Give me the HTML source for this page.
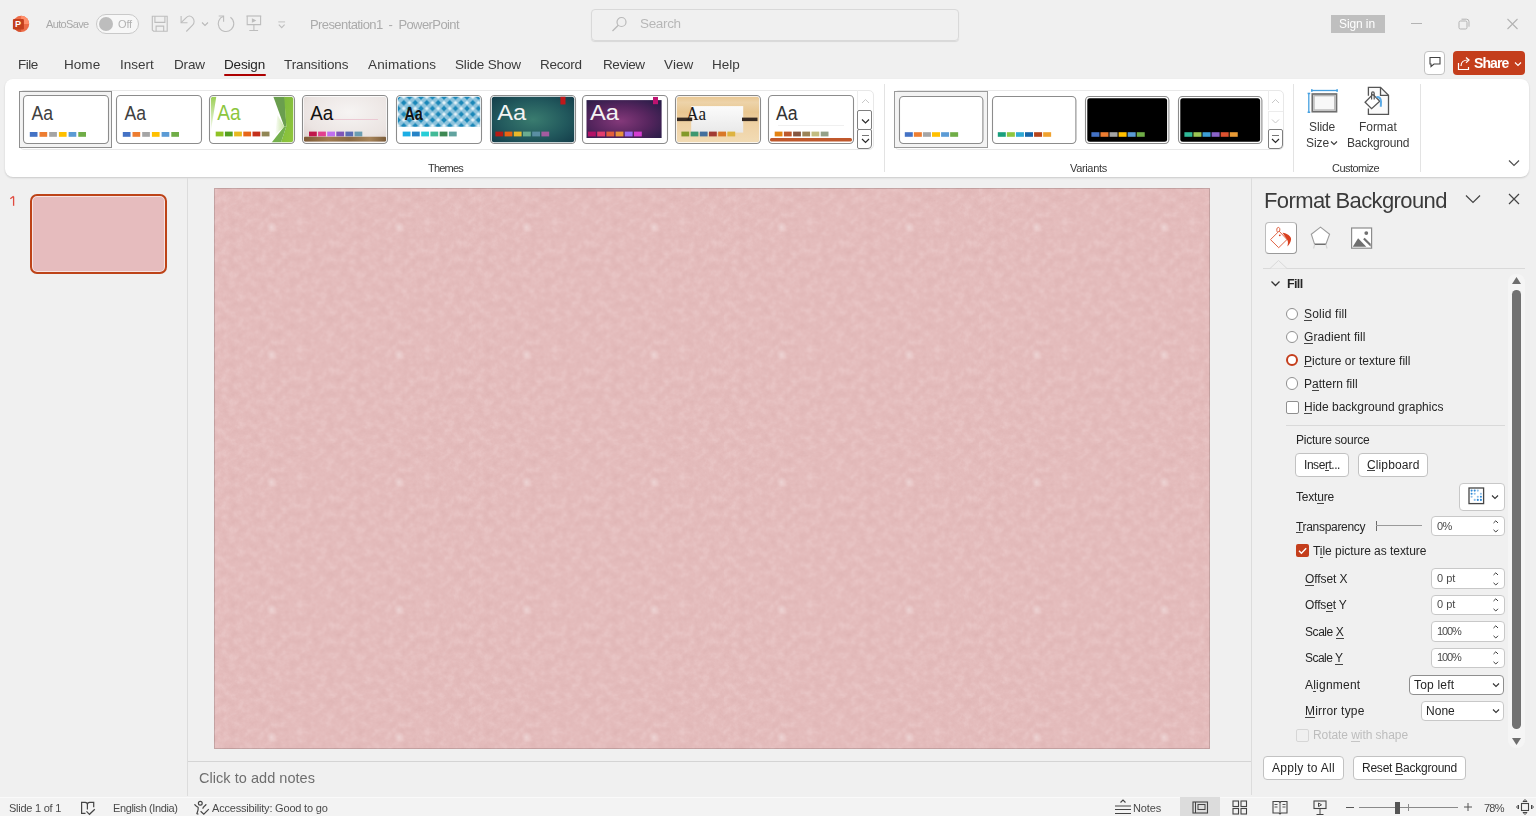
<!DOCTYPE html>
<html><head><meta charset="utf-8"><title>PowerPoint</title>
<style>
html,body{margin:0;padding:0;}
body{width:1536px;height:816px;overflow:hidden;position:relative;background:#f0f0f0;font-family:"Liberation Sans", sans-serif;}
.t{position:absolute;white-space:pre;line-height:1em;will-change:transform;}
svg{overflow:visible;}
</style></head><body>
<svg style="position:absolute;left:10px;top:13px;" width="22" height="22" viewBox="0 0 22 22"><circle cx="11.1" cy="10.9" r="8.1" fill="#ed6c47"/><path d="M11.1 2.8A8.1 8.1 0 0 1 19.2 10.9H11.1z" fill="#ff8f6b"/><path d="M11.1 19A8.1 8.1 0 0 1 3 10.9H11.1z" fill="#d35230"/><rect x="2.9" y="5.9" width="11" height="10.5" rx="1.2" fill="#c43e1c"/><text x="5.1" y="14.4" font-family="Liberation Sans" font-weight="700" font-size="9" fill="#fff">P</text></svg>
<div class="t" style="left:45.70px;top:18.69px;font-size:11px;color:#a8a8a8;font-weight:400;letter-spacing:-0.638px;">AutoSave</div>
<div style="position:absolute;left:95.5px;top:13.5px;width:43px;height:20px;box-sizing:border-box;border:1px solid #c9c9c9;border-radius:10px;background:#f7f7f7;"></div>
<div style="position:absolute;left:98.5px;top:17px;width:14px;height:14px;border-radius:50%;background:#bdbdbd;"></div>
<div class="t" style="left:118.00px;top:18.69px;font-size:11px;color:#b3b3b3;font-weight:400;letter-spacing:-0.161px;">Off</div>
<svg style="position:absolute;left:151px;top:15px;" width="18" height="18" viewBox="0 0 18 18"><path d="M1.3 1.3H16.2V16.2H2.6L1.3 14.9Z" fill="none" stroke="#bdbdbd" stroke-width="1.1"/><path d="M3.9 1.3V7.4H13.9V1.3M5.1 16.2V11.1H12.7V16.2" fill="none" stroke="#bdbdbd" stroke-width="1.1"/></svg>
<svg style="position:absolute;left:178px;top:15px;" width="20" height="18" viewBox="0 0 20 18"><path d="M3.1 1V7.7H9.5" fill="none" stroke="#bdbdbd" stroke-width="1.1"/><path d="M3.1 7.7L8.5 2.3C10.2 0.7 12.8 0.8 14.6 2.6C16.6 4.7 16.6 8.1 14.6 10.1L8.3 16.5" fill="none" stroke="#bdbdbd" stroke-width="1.1"/></svg>
<svg style="position:absolute;left:201px;top:21px;" width="8" height="6" viewBox="0 0 8 6"><path d="M1 1.5l3 3 3-3" fill="none" stroke="#b9b9b9" stroke-width="1.1"/></svg>
<svg style="position:absolute;left:217px;top:15px;" width="19" height="18" viewBox="0 0 19 18"><path d="M1.7 1H6.6V6.7" fill="none" stroke="#bdbdbd" stroke-width="1.1"/><path d="M6.6 1.3A7.8 7.8 0 1 0 13.4 2.3" fill="none" stroke="#bdbdbd" stroke-width="1.1"/></svg>
<svg style="position:absolute;left:245px;top:15px;" width="18" height="17" viewBox="0 0 18 17"><path d="M1.5 1H16.2" stroke="#bdbdbd" stroke-width="1.2"/><path d="M2.2 1V9.6H15.6V1" fill="none" stroke="#bdbdbd" stroke-width="1.1"/><path d="M8.9 9.6V15.5M4.3 15.5H13.1" stroke="#bdbdbd" stroke-width="1.1"/><path d="M6.9 3.3L11.3 5.5L6.9 7.7Z" fill="#bdbdbd"/></svg>
<svg style="position:absolute;left:277px;top:20px;" width="10" height="9" viewBox="0 0 10 9"><path d="M1.3 1.9H8.1" stroke="#c4c4c4" stroke-width="1.1"/><path d="M1.8 4.6L4.7 7.6L7.6 4.6" fill="none" stroke="#bdbdbd" stroke-width="1.1"/></svg>
<div class="t" style="left:310.00px;top:17.50px;font-size:13px;color:#ababab;font-weight:400;letter-spacing:-0.589px;">Presentation1  -  PowerPoint</div>
<div style="position:absolute;left:590.5px;top:8.5px;width:368.5px;height:32px;box-sizing:border-box;border:1px solid #d9d9d9;border-radius:4px;box-shadow:0 1px 1px rgba(0,0,0,0.10);"></div>
<svg style="position:absolute;left:611px;top:16px;" width="17" height="16" viewBox="0 0 17 16"><circle cx="10.5" cy="6" r="4.5" fill="none" stroke="#b9b9b9" stroke-width="1.2"/><path d="M7.3 9.2 L1.5 15" stroke="#b9b9b9" stroke-width="1.3"/></svg>
<div class="t" style="left:640.00px;top:17.07px;font-size:13.5px;color:#b7b7b7;font-weight:400;letter-spacing:-0.330px;">Search</div>
<div style="position:absolute;left:1330.5px;top:14.5px;width:54px;height:18.5px;background:#bfbfbf;"></div>
<div class="t" style="left:1339.40px;top:17.84px;font-size:12px;color:#ffffff;font-weight:400;letter-spacing:-0.100px;">Sign in</div>
<div style="position:absolute;left:1411px;top:23px;width:11px;height:1px;background:#b3b3b3;"></div>
<svg style="position:absolute;left:1458px;top:18px;" width="13" height="12" viewBox="0 0 13 12"><rect x="1" y="3" width="8" height="8" rx="1.5" fill="none" stroke="#b3b3b3" stroke-width="1"/><path d="M3.5 1.2h5a2.5 2.5 0 0 1 2.5 2.5v5" fill="none" stroke="#b3b3b3" stroke-width="1"/></svg>
<svg style="position:absolute;left:1506px;top:18px;" width="13" height="12" viewBox="0 0 13 12"><path d="M1.5 1L11.5 11M11.5 1L1.5 11" stroke="#b3b3b3" stroke-width="1.1"/></svg>
<div class="t" style="left:18.20px;top:57.57px;font-size:13.5px;color:#3b3b3b;font-weight:400;letter-spacing:-0.491px;">File</div>
<div class="t" style="left:64.30px;top:57.57px;font-size:13.5px;color:#3b3b3b;font-weight:400;letter-spacing:0.046px;">Home</div>
<div class="t" style="left:120.30px;top:57.57px;font-size:13.5px;color:#3b3b3b;font-weight:400;letter-spacing:-0.011px;">Insert</div>
<div class="t" style="left:173.70px;top:57.57px;font-size:13.5px;color:#3b3b3b;font-weight:400;letter-spacing:-0.129px;">Draw</div>
<div class="t" style="left:224.00px;top:57.57px;font-size:13.5px;color:#242424;font-weight:400;letter-spacing:-0.172px;">Design</div>
<div class="t" style="left:284.00px;top:57.57px;font-size:13.5px;color:#3b3b3b;font-weight:400;letter-spacing:-0.103px;">Transitions</div>
<div class="t" style="left:367.80px;top:57.57px;font-size:13.5px;color:#3b3b3b;font-weight:400;letter-spacing:0.140px;">Animations</div>
<div class="t" style="left:454.70px;top:57.57px;font-size:13.5px;color:#3b3b3b;font-weight:400;letter-spacing:-0.165px;">Slide Show</div>
<div class="t" style="left:539.90px;top:57.57px;font-size:13.5px;color:#3b3b3b;font-weight:400;letter-spacing:-0.305px;">Record</div>
<div class="t" style="left:602.50px;top:57.57px;font-size:13.5px;color:#3b3b3b;font-weight:400;letter-spacing:-0.428px;">Review</div>
<div class="t" style="left:663.80px;top:57.57px;font-size:13.5px;color:#3b3b3b;font-weight:400;letter-spacing:0.117px;">View</div>
<div class="t" style="left:712.20px;top:57.57px;font-size:13.5px;color:#3b3b3b;font-weight:400;letter-spacing:0.009px;">Help</div>
<div style="position:absolute;left:224px;top:74px;width:42px;height:2px;background:#ad0000;border-radius:1px;"></div>
<div style="position:absolute;left:1424.2px;top:51.3px;width:21.3px;height:23.8px;box-sizing:border-box;background:#fff;border:1px solid #c2c2c2;border-radius:4px;"></div>
<svg style="position:absolute;left:1428px;top:55.3px;" width="14" height="14" viewBox="0 0 14 14"><path d="M2 2.5h10v6.5H6l-3 2.5V9H2z" fill="none" stroke="#424242" stroke-width="1.1"/></svg>
<div style="position:absolute;left:1453px;top:51.3px;width:71.8px;height:23.7px;background:#c43e1c;border-radius:4px;"></div>
<svg style="position:absolute;left:1456px;top:55px;" width="16" height="16" viewBox="0 0 16 16"><path d="M2.5 8v6.5h10V12" fill="none" stroke="#fff" stroke-width="1.2"/><path d="M5 11c0-4 3-6 7-6" fill="none" stroke="#fff" stroke-width="1.2"/><path d="M10 2.5l3 2.6-3 2.6" fill="none" stroke="#fff" stroke-width="1.2"/></svg>
<div class="t" style="left:1474.00px;top:56.05px;font-size:14px;color:#ffffff;font-weight:700;letter-spacing:-0.884px;">Share</div>
<svg style="position:absolute;left:1514px;top:61px;" width="8" height="6" viewBox="0 0 8 6"><path d="M1 1.5l3 3 3-3" fill="none" stroke="#fff" stroke-width="1.2"/></svg>
<div style="position:absolute;left:5px;top:79px;width:1524px;height:98px;background:#fff;border-radius:8px;box-shadow:0 1px 2px rgba(0,0,0,0.16);"></div>
<div style="position:absolute;left:18.5px;top:89.5px;width:855px;height:60px;box-sizing:border-box;border:1px solid #e8e8e8;border-radius:5px;"></div>
<div style="position:absolute;left:19px;top:91px;width:93px;height:57px;box-sizing:border-box;border:1px solid #8f8f8f;background:#f3f3f3;"></div>
<svg style="position:absolute;left:23px;top:95.3px;" width="86" height="49" viewBox="0 0 86 49"><defs><clipPath id="tc0"><rect x="1.8" y="1.8" width="82.4" height="45.4" rx="2.5"/></clipPath></defs><rect x="0.5" y="0.5" width="85" height="48" rx="4" fill="#fff" stroke="#8c8c8c" stroke-width="1.1"/><g clip-path="url(#tc0)"><rect x="0" y="0" width="86" height="49" fill="#fff"/><text x="8.5" y="25.3" font-family="Liberation Sans" font-size="20.5" font-weight="400" fill="#404040" textLength="21.5" lengthAdjust="spacingAndGlyphs" >Aa</text><rect x="6.80" y="37" width="7.7" height="4.8" fill="#4472c4"/><rect x="16.50" y="37" width="7.7" height="4.8" fill="#ed7d31"/><rect x="26.20" y="37" width="7.7" height="4.8" fill="#a5a5a5"/><rect x="35.90" y="37" width="7.7" height="4.8" fill="#ffc000"/><rect x="45.60" y="37" width="7.7" height="4.8" fill="#5b9bd5"/><rect x="55.30" y="37" width="7.7" height="4.8" fill="#70ad47"/></g></svg>
<svg style="position:absolute;left:116px;top:95.3px;" width="86" height="49" viewBox="0 0 86 49"><defs><clipPath id="tc1"><rect x="1.8" y="1.8" width="82.4" height="45.4" rx="2.5"/></clipPath></defs><rect x="0.5" y="0.5" width="85" height="48" rx="4" fill="#fff" stroke="#8c8c8c" stroke-width="1.1"/><g clip-path="url(#tc1)"><rect x="0" y="0" width="86" height="49" fill="#fff"/><text x="8.5" y="25.3" font-family="Liberation Sans" font-size="20.5" font-weight="400" fill="#404040" textLength="21.5" lengthAdjust="spacingAndGlyphs" >Aa</text><rect x="6.80" y="37" width="7.7" height="4.8" fill="#4472c4"/><rect x="16.50" y="37" width="7.7" height="4.8" fill="#ed7d31"/><rect x="26.20" y="37" width="7.7" height="4.8" fill="#a5a5a5"/><rect x="35.90" y="37" width="7.7" height="4.8" fill="#ffc000"/><rect x="45.60" y="37" width="7.7" height="4.8" fill="#5b9bd5"/><rect x="55.30" y="37" width="7.7" height="4.8" fill="#70ad47"/></g></svg>
<svg style="position:absolute;left:209.3px;top:95.3px;" width="86" height="49" viewBox="0 0 86 49"><defs><clipPath id="tc2"><rect x="1.8" y="1.8" width="82.4" height="45.4" rx="2.5"/></clipPath></defs><rect x="0.5" y="0.5" width="85" height="48" rx="4" fill="#fff" stroke="#8c8c8c" stroke-width="1.1"/><g clip-path="url(#tc2)"><rect x="0" y="0" width="86" height="49" fill="#fff"/><defs><linearGradient id="fg1" x1="0" y1="0" x2="0" y2="1"><stop offset="0" stop-color="#9bcf55"/><stop offset="1" stop-color="#ffffff"/></linearGradient><linearGradient id="fg2" x1="0" y1="0" x2="1" y2="1"><stop offset="0" stop-color="#7cb83f"/><stop offset="1" stop-color="#92c83a"/></linearGradient><linearGradient id="fg3" x1="0" y1="0" x2="1" y2="0"><stop offset="0" stop-color="#ffffff"/><stop offset="1" stop-color="#c6e3a0"/></linearGradient></defs><path d="M1.6 1.6H7.3L1.6 38z" fill="url(#fg1)"/><path d="M64.3 1.6H75.8L77.3 31.5H75.2z" fill="#6a9e4e"/><path d="M75.2 1.6H86V49H71.5L77.3 31.5z" fill="url(#fg2)"/><path d="M61.5 49L75.2 31.5H77.3L71.5 49z" fill="#74b04c"/><path d="M68.5 20L75.2 31.5L66 40z" fill="url(#fg3)"/><text x="8.25" y="24.8" font-family="Liberation Sans" font-size="22" font-weight="400" fill="#8cc63e" textLength="23.3" lengthAdjust="spacingAndGlyphs" >Aa</text><rect x="6.70" y="36.6" width="7.8" height="4.8" fill="#90c226"/><rect x="15.90" y="36.6" width="7.8" height="4.8" fill="#54a021"/><rect x="25.10" y="36.6" width="7.8" height="4.8" fill="#e6b91e"/><rect x="34.30" y="36.6" width="7.8" height="4.8" fill="#e76618"/><rect x="43.50" y="36.6" width="7.8" height="4.8" fill="#c42f1a"/><rect x="52.70" y="36.6" width="7.8" height="4.8" fill="#918655"/></g></svg>
<svg style="position:absolute;left:302.2px;top:95.3px;" width="86" height="49" viewBox="0 0 86 49"><defs><clipPath id="tc3"><rect x="1.8" y="1.8" width="82.4" height="45.4" rx="2.5"/></clipPath></defs><rect x="0.5" y="0.5" width="85" height="48" rx="4" fill="#fff" stroke="#8c8c8c" stroke-width="1.1"/><g clip-path="url(#tc3)"><rect x="0" y="0" width="86" height="49" fill="#fff"/><defs><radialGradient id="wg" cx="0.55" cy="0.35" r="0.75"><stop offset="0" stop-color="#f6f4f3"/><stop offset="0.7" stop-color="#ebe4e2"/><stop offset="1" stop-color="#ddd2ce"/></radialGradient><linearGradient id="wd" x1="0" y1="0" x2="1" y2="0"><stop offset="0" stop-color="#7d5a35"/><stop offset="0.3" stop-color="#a07b50"/><stop offset="0.55" stop-color="#8a6a44"/><stop offset="0.8" stop-color="#a7845a"/><stop offset="1" stop-color="#7b5c39"/></linearGradient></defs><rect x="0" y="0" width="86" height="49" fill="url(#wg)"/><rect x="18" y="24" width="58" height="1" fill="#ebc9d3"/><text x="8.3" y="24.5" font-family="Liberation Sans" font-size="20.5" font-weight="400" fill="#111" textLength="23" lengthAdjust="spacingAndGlyphs" >Aa</text><rect x="7.00" y="36.6" width="7.8" height="4.8" fill="#c0174a"/><rect x="16.10" y="36.6" width="7.8" height="4.8" fill="#e3408e"/><rect x="25.20" y="36.6" width="7.8" height="4.8" fill="#c06ff0"/><rect x="34.30" y="36.6" width="7.8" height="4.8" fill="#7f55b8"/><rect x="43.40" y="36.6" width="7.8" height="4.8" fill="#5b6db4"/><rect x="52.50" y="36.6" width="7.8" height="4.8" fill="#6a9db2"/><rect x="2" y="41.7" width="82" height="4.8" rx="1" fill="url(#wd)"/></g></svg>
<svg style="position:absolute;left:395.7px;top:95.3px;" width="86" height="49" viewBox="0 0 86 49"><defs><clipPath id="tc4"><rect x="1.8" y="1.8" width="82.4" height="45.4" rx="2.5"/></clipPath></defs><rect x="0.5" y="0.5" width="85" height="48" rx="4" fill="#fff" stroke="#8c8c8c" stroke-width="1.1"/><g clip-path="url(#tc4)"><rect x="0" y="0" width="86" height="49" fill="#fff"/><defs><pattern id="lat" x="2" y="2" width="11.5" height="11.5" patternUnits="userSpaceOnUse"><rect width="11.5" height="11.5" fill="#8ec3dc"/><path d="M5.75 2.85L8.6 5.75 5.75 8.6 2.9 5.75z" fill="#1a87b8"/><path d="M0 -2.85L2.85 0 0 2.85 -2.85 0zM11.5 -2.85L14.35 0 11.5 2.85 8.65 0zM0 8.65L2.85 11.5 0 14.35 -2.85 11.5zM11.5 8.65L14.35 11.5 11.5 14.35 8.65 11.5z" fill="#1a87b8"/><circle cx="5.75" cy="0" r="1.7" fill="#e4f2f8"/><circle cx="0" cy="5.75" r="1.7" fill="#e4f2f8"/><circle cx="11.5" cy="5.75" r="1.7" fill="#e4f2f8"/><circle cx="5.75" cy="11.5" r="1.7" fill="#e4f2f8"/></pattern></defs><rect x="0" y="0" width="86" height="31.8" fill="url(#lat)"/><text x="8.6" y="24.5" font-family="Liberation Sans" font-size="19" font-weight="700" fill="#111" textLength="18.2" lengthAdjust="spacingAndGlyphs" >Aa</text><rect x="6.70" y="36.6" width="7.8" height="4.8" fill="#1cade4"/><rect x="15.94" y="36.6" width="7.8" height="4.8" fill="#2683c6"/><rect x="25.18" y="36.6" width="7.8" height="4.8" fill="#27ced7"/><rect x="34.42" y="36.6" width="7.8" height="4.8" fill="#42ba97"/><rect x="43.66" y="36.6" width="7.8" height="4.8" fill="#3e8853"/><rect x="52.90" y="36.6" width="7.8" height="4.8" fill="#62a39f"/></g></svg>
<svg style="position:absolute;left:489.5px;top:95.3px;" width="86" height="49" viewBox="0 0 86 49"><defs><clipPath id="tc5"><rect x="1.8" y="1.8" width="82.4" height="45.4" rx="2.5"/></clipPath></defs><rect x="0.5" y="0.5" width="85" height="48" rx="4" fill="#fff" stroke="#8c8c8c" stroke-width="1.1"/><g clip-path="url(#tc5)"><rect x="0" y="0" width="86" height="49" fill="#fff"/><defs><radialGradient id="tg" cx="0.5" cy="0.5" r="0.7"><stop offset="0" stop-color="#3a7c6f"/><stop offset="0.55" stop-color="#22595d"/><stop offset="1" stop-color="#123a48"/></radialGradient></defs><rect x="0" y="0" width="86" height="49" fill="url(#tg)"/><rect x="70.4" y="0" width="5.1" height="9.5" fill="#c0181a"/><text x="7.3" y="25.2" font-family="Liberation Sans" font-size="22" font-weight="400" fill="#f4f4f4" textLength="29" lengthAdjust="spacingAndGlyphs" >Aa</text><rect x="5.40" y="36.6" width="7.8" height="4.8" fill="#b81a14"/><rect x="14.60" y="36.6" width="7.8" height="4.8" fill="#ea6312"/><rect x="23.80" y="36.6" width="7.8" height="4.8" fill="#e9b92a"/><rect x="33.00" y="36.6" width="7.8" height="4.8" fill="#6aac90"/><rect x="42.20" y="36.6" width="7.8" height="4.8" fill="#5a8ea3"/><rect x="51.40" y="36.6" width="7.8" height="4.8" fill="#a35c9f"/></g></svg>
<svg style="position:absolute;left:581.9px;top:95.3px;" width="86" height="49" viewBox="0 0 86 49"><defs><clipPath id="tc6"><rect x="1.8" y="1.8" width="82.4" height="45.4" rx="2.5"/></clipPath></defs><rect x="0.5" y="0.5" width="85" height="48" rx="4" fill="#fff" stroke="#8c8c8c" stroke-width="1.1"/><g clip-path="url(#tc6)"><rect x="0" y="0" width="86" height="49" fill="#fff"/><defs><radialGradient id="pg" cx="0.45" cy="0.55" r="0.7"><stop offset="0" stop-color="#84397a"/><stop offset="0.55" stop-color="#56255e"/><stop offset="1" stop-color="#2a1d48"/></radialGradient></defs><rect x="4.5" y="5.1" width="75.1" height="37.9" fill="url(#pg)"/><rect x="71" y="1.9" width="5" height="7.3" fill="#bd1370"/><text x="8" y="25.2" font-family="Liberation Sans" font-size="22" font-weight="400" fill="#f4f4f4" textLength="29" lengthAdjust="spacingAndGlyphs" >Aa</text><rect x="6.00" y="36.6" width="7.8" height="4.8" fill="#b31166"/><rect x="15.20" y="36.6" width="7.8" height="4.8" fill="#e33d6f"/><rect x="24.40" y="36.6" width="7.8" height="4.8" fill="#e45f3c"/><rect x="33.60" y="36.6" width="7.8" height="4.8" fill="#e9943a"/><rect x="42.80" y="36.6" width="7.8" height="4.8" fill="#9b6bf2"/><rect x="52.00" y="36.6" width="7.8" height="4.8" fill="#d53dd0"/></g></svg>
<svg style="position:absolute;left:674.9px;top:95.3px;" width="86" height="49" viewBox="0 0 86 49"><defs><clipPath id="tc7"><rect x="1.8" y="1.8" width="82.4" height="45.4" rx="2.5"/></clipPath></defs><rect x="0.5" y="0.5" width="85" height="48" rx="4" fill="#fff" stroke="#8c8c8c" stroke-width="1.1"/><g clip-path="url(#tc7)"><rect x="0" y="0" width="86" height="49" fill="#fff"/><defs><linearGradient id="og" x1="0" y1="0" x2="0" y2="1"><stop offset="0" stop-color="#e9c48c"/><stop offset="0.15" stop-color="#edd3a9"/><stop offset="0.35" stop-color="#e8c690"/><stop offset="0.6" stop-color="#efd2a5"/><stop offset="1" stop-color="#f2dcb6"/></linearGradient><linearGradient id="ow" x1="0" y1="0" x2="0" y2="1"><stop offset="0" stop-color="#fbfbfb"/><stop offset="1" stop-color="#e9e9e9"/></linearGradient></defs><rect x="0" y="0" width="86" height="49" fill="url(#og)"/><rect x="16.2" y="11.1" width="52" height="26.5" fill="url(#ow)"/><rect x="2" y="22.6" width="15.2" height="3.5" fill="#362a22"/><rect x="67" y="22.6" width="15.5" height="3.5" fill="#362a22"/><text x="11.2" y="24.5" font-family="Liberation Serif" font-size="18" font-weight="400" fill="#1a1a1a" textLength="20" lengthAdjust="spacingAndGlyphs" >Aa</text><rect x="6.40" y="36.6" width="7.8" height="4.8" fill="#83992a"/><rect x="15.60" y="36.6" width="7.8" height="4.8" fill="#3c9770"/><rect x="24.80" y="36.6" width="7.8" height="4.8" fill="#44709d"/><rect x="34.00" y="36.6" width="7.8" height="4.8" fill="#a23c33"/><rect x="43.20" y="36.6" width="7.8" height="4.8" fill="#d97828"/><rect x="52.40" y="36.6" width="7.8" height="4.8" fill="#deb340"/></g></svg>
<svg style="position:absolute;left:767.6px;top:95.3px;" width="86" height="49" viewBox="0 0 86 49"><defs><clipPath id="tc8"><rect x="1.8" y="1.8" width="82.4" height="45.4" rx="2.5"/></clipPath></defs><rect x="0.5" y="0.5" width="85" height="48" rx="4" fill="#fff" stroke="#8c8c8c" stroke-width="1.1"/><g clip-path="url(#tc8)"><rect x="0" y="0" width="86" height="49" fill="#fff"/><rect x="10" y="30" width="66" height="0.6" fill="#e6e6e6"/><text x="8" y="24.5" font-family="Liberation Sans" font-size="19.5" font-weight="400" fill="#333" textLength="21.6" lengthAdjust="spacingAndGlyphs" >Aa</text><rect x="6.70" y="36.6" width="7.8" height="4.8" fill="#e48312"/><rect x="15.90" y="36.6" width="7.8" height="4.8" fill="#bd582c"/><rect x="25.10" y="36.6" width="7.8" height="4.8" fill="#865640"/><rect x="34.30" y="36.6" width="7.8" height="4.8" fill="#9b8357"/><rect x="43.50" y="36.6" width="7.8" height="4.8" fill="#c2bc80"/><rect x="52.70" y="36.6" width="7.8" height="4.8" fill="#94a088"/><rect x="2" y="43" width="82" height="3.6" rx="1.5" fill="#c0582c"/></g></svg>
<div style="position:absolute;left:857.4px;top:90px;width:15px;height:20.3px;box-sizing:border-box;border-left:1px solid #ececec;"></div>
<svg style="position:absolute;left:860.9px;top:97.5px;" width="9" height="6" viewBox="0 0 9 6"><path d="M1 5l3.5-3.5L8 5" fill="none" stroke="#c8c8c8" stroke-width="1"/></svg>
<div style="position:absolute;left:857.4px;top:110.3px;width:15px;height:19.4px;box-sizing:border-box;border:1px solid #7f7f7f;border-radius:2px;background:#fff;"></div>
<svg style="position:absolute;left:860.9px;top:117.5px;" width="9" height="6" viewBox="0 0 9 6"><path d="M1 1.5l3.5 3.5L8 1.5" fill="none" stroke="#2b2b2b" stroke-width="1.2"/></svg>
<div style="position:absolute;left:857.4px;top:128.7px;width:15px;height:20px;box-sizing:border-box;border:1px solid #7f7f7f;border-radius:2px 2px 4px 2px;background:#fff;"></div>
<svg style="position:absolute;left:860.9px;top:133.5px;" width="9" height="10" viewBox="0 0 9 10"><path d="M1 1.5h7" stroke="#777" stroke-width="1"/><path d="M1 5l3.5 3.5L8 5" fill="none" stroke="#2b2b2b" stroke-width="1.2"/></svg>
<div class="t" style="left:428.00px;top:162.69px;font-size:11px;color:#383838;font-weight:400;letter-spacing:-0.792px;">Themes</div>
<div style="position:absolute;left:883.5px;top:84px;width:1px;height:88px;background:#e3e3e3;"></div>
<div style="position:absolute;left:893.5px;top:89.5px;width:390px;height:60px;box-sizing:border-box;border:1px solid #e8e8e8;border-radius:5px;"></div>
<div style="position:absolute;left:894.2px;top:91px;width:93.4px;height:57px;box-sizing:border-box;border:1px solid #9a9a9a;background:#f3f3f3;"></div>
<svg style="position:absolute;left:898.9px;top:95.6px;" width="84.4" height="48" viewBox="0 0 84.4 48"><defs><clipPath id="vc0"><rect x="1.7" y="1.7" width="81.0" height="44.6" rx="2.5"/></clipPath></defs><rect x="0.5" y="0.5" width="83.4" height="47" rx="4" fill="#fff" stroke="#8c8c8c" stroke-width="1.1"/><g clip-path="url(#vc0)"><rect width="84.4" height="48" fill="#fff"/><rect x="5.80" y="36.2" width="8" height="4.6" fill="#4472c4"/><rect x="14.87" y="36.2" width="8" height="4.6" fill="#ed7d31"/><rect x="23.94" y="36.2" width="8" height="4.6" fill="#a5a5a5"/><rect x="33.01" y="36.2" width="8" height="4.6" fill="#ffc000"/><rect x="42.08" y="36.2" width="8" height="4.6" fill="#5b9bd5"/><rect x="51.15" y="36.2" width="8" height="4.6" fill="#70ad47"/></g></svg>
<svg style="position:absolute;left:991.8px;top:95.6px;" width="84.4" height="48" viewBox="0 0 84.4 48"><defs><clipPath id="vc1"><rect x="1.7" y="1.7" width="81.0" height="44.6" rx="2.5"/></clipPath></defs><rect x="0.5" y="0.5" width="83.4" height="47" rx="4" fill="#fff" stroke="#8c8c8c" stroke-width="1.1"/><g clip-path="url(#vc1)"><rect width="84.4" height="48" fill="#fff"/><rect x="5.80" y="36.2" width="8" height="4.6" fill="#199f7d"/><rect x="14.87" y="36.2" width="8" height="4.6" fill="#8dc63f"/><rect x="23.94" y="36.2" width="8" height="4.6" fill="#2ea8d4"/><rect x="33.01" y="36.2" width="8" height="4.6" fill="#1565a9"/><rect x="42.08" y="36.2" width="8" height="4.6" fill="#b5421a"/><rect x="51.15" y="36.2" width="8" height="4.6" fill="#f0a22e"/></g></svg>
<svg style="position:absolute;left:1085px;top:95.6px;" width="84.4" height="48" viewBox="0 0 84.4 48"><defs><clipPath id="vc2"><rect x="2.3" y="2.3" width="79.80000000000001" height="43.4" rx="2.5"/></clipPath></defs><rect x="0.5" y="0.5" width="83.4" height="47" rx="4" fill="#fff" stroke="#8c8c8c" stroke-width="1.1"/><g clip-path="url(#vc2)"><rect width="84.4" height="48" fill="#000"/><rect x="6.40" y="36.2" width="8" height="4.6" fill="#4472c4"/><rect x="15.47" y="36.2" width="8" height="4.6" fill="#ed7d31"/><rect x="24.54" y="36.2" width="8" height="4.6" fill="#a5a5a5"/><rect x="33.61" y="36.2" width="8" height="4.6" fill="#ffc000"/><rect x="42.68" y="36.2" width="8" height="4.6" fill="#5b9bd5"/><rect x="51.75" y="36.2" width="8" height="4.6" fill="#70ad47"/></g></svg>
<svg style="position:absolute;left:1177.8px;top:95.6px;" width="84.4" height="48" viewBox="0 0 84.4 48"><defs><clipPath id="vc3"><rect x="2.3" y="2.3" width="79.80000000000001" height="43.4" rx="2.5"/></clipPath></defs><rect x="0.5" y="0.5" width="83.4" height="47" rx="4" fill="#fff" stroke="#8c8c8c" stroke-width="1.1"/><g clip-path="url(#vc3)"><rect width="84.4" height="48" fill="#000"/><rect x="6.40" y="36.2" width="8" height="4.6" fill="#2fb898"/><rect x="15.47" y="36.2" width="8" height="4.6" fill="#9bc554"/><rect x="24.54" y="36.2" width="8" height="4.6" fill="#3d9fd6"/><rect x="33.61" y="36.2" width="8" height="4.6" fill="#8a63c8"/><rect x="42.68" y="36.2" width="8" height="4.6" fill="#dc5230"/><rect x="51.75" y="36.2" width="8" height="4.6" fill="#e99a35"/></g></svg>
<div style="position:absolute;left:1267.6px;top:90.2px;width:15px;height:20.3px;box-sizing:border-box;border-left:1px solid #ececec;"></div>
<svg style="position:absolute;left:1271.1px;top:97.7px;" width="9" height="6" viewBox="0 0 9 6"><path d="M1 5l3.5-3.5L8 5" fill="none" stroke="#c8c8c8" stroke-width="1"/></svg>
<div style="position:absolute;left:1267.6px;top:110.5px;width:15px;height:19.4px;box-sizing:border-box;border-left:1px solid #ececec;border-top:1px solid #ececec;"></div>
<svg style="position:absolute;left:1271.1px;top:117.7px;" width="9" height="6" viewBox="0 0 9 6"><path d="M1 1.5l3.5 3.5L8 1.5" fill="none" stroke="#c8c8c8" stroke-width="1"/></svg>
<div style="position:absolute;left:1267.6px;top:128.9px;width:15px;height:20px;box-sizing:border-box;border:1px solid #7f7f7f;border-radius:2px 2px 4px 2px;background:#fff;"></div>
<svg style="position:absolute;left:1271.1px;top:133.7px;" width="9" height="10" viewBox="0 0 9 10"><path d="M1 1.5h7" stroke="#777" stroke-width="1"/><path d="M1 5l3.5 3.5L8 5" fill="none" stroke="#2b2b2b" stroke-width="1.2"/></svg>
<div class="t" style="left:1070.00px;top:162.69px;font-size:11px;color:#383838;font-weight:400;letter-spacing:-0.343px;">Variants</div>
<div style="position:absolute;left:1293px;top:84px;width:1px;height:88px;background:#e3e3e3;"></div>
<svg style="position:absolute;left:1300px;top:84px;" width="44" height="32" viewBox="0 0 44 32"><path d="M11.7 6.5H37.1" stroke="#46a0e0" stroke-width="1.3"/><rect x="11" y="5.2" width="1.6" height="2.6" fill="#46a0e0"/><rect x="36.3" y="5.2" width="1.6" height="2.6" fill="#46a0e0"/><path d="M8.8 9.4V28.3" stroke="#46a0e0" stroke-width="1.3"/><rect x="7.6" y="8.7" width="2.6" height="1.5" fill="#46a0e0"/><rect x="7.6" y="27.5" width="2.6" height="1.5" fill="#46a0e0"/><rect x="12.3" y="10" width="24.2" height="17.7" fill="#f8f8f8" stroke="#6e6e6e" stroke-width="1.7"/><rect x="14" y="11.7" width="20.8" height="14.3" fill="none" stroke="#b4b4b4" stroke-width="1.3"/></svg>
<div class="t" style="left:1308.80px;top:121.34px;font-size:12px;color:#3b3b3b;font-weight:400;letter-spacing:-0.098px;">Slide</div>
<div class="t" style="left:1305.70px;top:137.34px;font-size:12px;color:#3b3b3b;font-weight:400;letter-spacing:-0.086px;">Size</div>
<svg style="position:absolute;left:1330px;top:140px;" width="8" height="6" viewBox="0 0 8 6"><path d="M1 1.5l3 3 3-3" fill="none" stroke="#3b3b3b" stroke-width="1.1"/></svg>
<svg style="position:absolute;left:1360px;top:84px;" width="32" height="32" viewBox="0 0 32 32"><path d="M8.4 11.7V3.3H20.5L28.5 11.3V30.3H8.4V24.4" fill="#fafafa" stroke="#555" stroke-width="1.3"/><path d="M20.5 3.3V11.3H28.5" fill="none" stroke="#555" stroke-width="1.3"/><path d="M5.1 18.2L12.9 10.4L19.8 17.3L11.6 24.7Z" fill="#fff" stroke="#555" stroke-width="1.3"/><path d="M11.6 15.5V9.2a1.3 1.3 0 0 1 2.6 0V15.6" fill="none" stroke="#555" stroke-width="1.2"/><path d="M16.5 13C19.5 12.8 20.8 15 21 17.5L20.8 22.8" fill="none" stroke="#5aaae6" stroke-width="2"/></svg>
<div class="t" style="left:1359.00px;top:121.34px;font-size:12px;color:#3b3b3b;font-weight:400;letter-spacing:-0.053px;">Format</div>
<div class="t" style="left:1347.00px;top:137.34px;font-size:12px;color:#3b3b3b;font-weight:400;letter-spacing:-0.175px;">Background</div>
<div class="t" style="left:1332.40px;top:162.69px;font-size:11px;color:#383838;font-weight:400;letter-spacing:-0.541px;">Customize</div>
<div style="position:absolute;left:1420px;top:84px;width:1px;height:88px;background:#e3e3e3;"></div>
<svg style="position:absolute;left:1508px;top:159px;" width="12" height="8" viewBox="0 0 12 8"><path d="M1 1.5l5 5 5-5" fill="none" stroke="#505050" stroke-width="1.2"/></svg>
<svg style="position:absolute;left:8px;top:194px;" width="10" height="14" viewBox="0 0 10 14"><path d="M5.6 2.6V11.8" stroke="#e04a3f" stroke-width="1.3"/><path d="M2.3 4.8L5.6 2.3" stroke="#e04a3f" stroke-width="1.3"/></svg>
<div style="position:absolute;left:30px;top:194.2px;width:137px;height:79.8px;box-sizing:border-box;border:2.2px solid #bd4318;border-radius:7px;background:#e6bcbe;box-shadow:inset 0 0 0 1px #f6e4e4;"></div>
<div style="position:absolute;left:187px;top:178px;width:1px;height:618px;background:#dcdcdc;"></div>
<div style="position:absolute;left:214px;top:188px;width:996px;height:561px;background:#e4bcbc;"></div>
<svg style="position:absolute;left:214px;top:188px;overflow:hidden;" width="996" height="561" viewBox="0 0 996 561"><defs><filter id="nz" x="0" y="0" width="128" height="128" filterUnits="userSpaceOnUse" color-interpolation-filters="sRGB"><feTurbulence type="fractalNoise" baseFrequency="0.13" numOctaves="4" seed="11" stitchTiles="stitch" result="t"/><feColorMatrix in="t" type="matrix" values="0 0 0 0 0.955  0 0 0 0 0.865  0 0 0 0 0.865  0.85 0 0 0 -0.425" result="lt"/><feColorMatrix in="t" type="matrix" values="0 0 0 0 0.84  0 0 0 0 0.66  0 0 0 0 0.66  -0.85 0 0 0 0.425" result="dk"/><feMerge><feMergeNode in="lt"/><feMergeNode in="dk"/></feMerge></filter><radialGradient id="spot"><stop offset="0" stop-color="#f4e6e6" stop-opacity="0.6"/><stop offset="0.5" stop-color="#f0dcdc" stop-opacity="0.35"/><stop offset="1" stop-color="#f0dada" stop-opacity="0"/></radialGradient><pattern id="tex" x="0" y="0" width="127.5" height="127.5" patternUnits="userSpaceOnUse"><rect width="127.5" height="127.5" fill="#e4bcbc"/><rect width="128" height="128" filter="url(#nz)"/><circle cx="57.5" cy="39" r="5.5" fill="url(#spot)"/></pattern></defs><rect width="996" height="561" fill="url(#tex)"/><rect x="0.5" y="0.5" width="995" height="560" fill="none" stroke="#000" stroke-opacity="0.14" stroke-width="1"/></svg>
<div style="position:absolute;left:188px;top:761px;width:1063px;height:1px;background:#d4d4d4;"></div>
<div class="t" style="left:199.20px;top:770.73px;font-size:14.5px;color:#6e6e6e;font-weight:400;letter-spacing:0.041px;">Click to add notes</div>
<div style="position:absolute;left:1251px;top:178px;width:1px;height:617px;background:#dcdcdc;"></div>
<div class="t" style="left:1264.00px;top:189.88px;font-size:22px;color:#3a3a3a;font-weight:400;letter-spacing:-0.612px;">Format Background</div>
<svg style="position:absolute;left:1465px;top:194px;" width="16" height="10" viewBox="0 0 16 10"><path d="M1 1.5l7 7 7-7" fill="none" stroke="#444" stroke-width="1.2"/></svg>
<svg style="position:absolute;left:1508px;top:193px;" width="12" height="12" viewBox="0 0 12 12"><path d="M1 1l10 10M11 1L1 11" stroke="#444" stroke-width="1.2"/></svg>
<div style="position:absolute;left:1265.2px;top:222.2px;width:31.5px;height:31.5px;box-sizing:border-box;background:#fff;border:1px solid #bdbdbd;border-right-color:#9a9a9a;border-bottom-color:#9a9a9a;border-radius:4px;"></div>
<svg style="position:absolute;left:1265px;top:222px;" width="32" height="32" viewBox="0 0 32 32"><path d="M5.5 17.6L14.1 9.1L22 17.5L13.7 25.7Z" fill="none" stroke="#e06445" stroke-width="1"/><path d="M12.4 10.2C11.2 8 11.8 5.4 13.3 5.4C14.7 5.4 15.4 7.4 14.4 9.4" fill="none" stroke="#e06445" stroke-width="1"/><circle cx="14.8" cy="13.3" r="0.9" fill="#d9401f"/><path d="M17.5 10.7C22 11.3 26.3 13.8 26.1 17.3C25.9 20 24.2 22.6 22.4 24.5C23 21.7 23.4 19.4 22 17.4Z" fill="#d9401f"/></svg>
<svg style="position:absolute;left:1305px;top:222px;" width="30" height="30" viewBox="0 0 30 30"><path d="M15.5 5.1L24.6 12.2L20.9 22.3H9.6L6.3 12.2Z" fill="#fff" stroke="#9c9c9c" stroke-width="1.1"/><path d="M9.6 22.3H20.9" stroke="#6f6f6f" stroke-width="1.4"/><path d="M9.6 22.3L8.6 26.5M20.9 22.3L22.1 26.5" stroke="#d2d2d2" stroke-width="1.1"/></svg>
<svg style="position:absolute;left:1348px;top:224px;" width="28" height="28" viewBox="0 0 28 28"><rect x="3.6" y="4" width="20" height="20.2" fill="#fff" stroke="#8c8c8c" stroke-width="1.2"/><circle cx="18.3" cy="9.1" r="1.9" fill="#707070"/><path d="M4.8 22.8L10.1 14.3L18.3 22.8Z" fill="#6f6f6f"/><path d="M15.1 15.3L16.7 13.8L22.7 19.7V22.8Z" fill="#6f6f6f"/></svg>
<div style="position:absolute;left:1263px;top:268px;width:262px;height:1px;background:#d9d9d9;"></div>
<svg style="position:absolute;left:1270px;top:260px;" width="18" height="9" viewBox="0 0 18 9"><path d="M0 8.5L8.5 0.5 17 8.5" fill="#f0f0f0" stroke="#d9d9d9" stroke-width="1"/></svg>
<svg style="position:absolute;left:1270px;top:280px;" width="11" height="8" viewBox="0 0 11 8"><path d="M1.5 1.5l4 4 4-4" fill="none" stroke="#333" stroke-width="1.3"/></svg>
<div class="t" style="left:1286.70px;top:277.92px;font-size:12.5px;color:#262626;font-weight:700;letter-spacing:-0.641px;">Fill</div>
<div style="position:absolute;left:1508px;top:273.5px;width:17px;height:474px;background:#f5f5f5;border-radius:8px;"></div>
<svg style="position:absolute;left:1511px;top:276px;" width="11" height="9" viewBox="0 0 11 9"><path d="M1 8h9L5.5 1z" fill="#6e6e6e"/></svg>
<div style="position:absolute;left:1511.9px;top:290px;width:8.8px;height:439px;background:#717171;border-radius:4.4px;"></div>
<svg style="position:absolute;left:1511px;top:737px;" width="11" height="9" viewBox="0 0 11 9"><path d="M1 1h9L5.5 8z" fill="#6e6e6e"/></svg>
<div style="position:absolute;left:1285.5px;top:307.7px;width:12.5px;height:12.5px;box-sizing:border-box;border-radius:50%;border:1px solid #8f8f8f;background:#fff;"></div>
<div class="t" style="left:1303.80px;top:308.24px;font-size:12px;color:#262626;font-weight:400;letter-spacing:0.184px;">Solid fill</div>
<div style="position:absolute;left:1303.80px;top:320.00px;width:8.02px;height:1px;background:#262626;opacity:0.85"></div>
<div style="position:absolute;left:1285.5px;top:330.6px;width:12.5px;height:12.5px;box-sizing:border-box;border-radius:50%;border:1px solid #8f8f8f;background:#fff;"></div>
<div class="t" style="left:1303.80px;top:331.14px;font-size:12px;color:#262626;font-weight:400;letter-spacing:0.061px;">Gradient fill</div>
<div style="position:absolute;left:1303.80px;top:342.90px;width:9.34px;height:1px;background:#262626;opacity:0.85"></div>
<div style="position:absolute;left:1285.5px;top:353.8px;width:12.5px;height:12.5px;box-sizing:border-box;border-radius:50%;border:2.7px solid #c43e1c;background:#fff;"></div>
<div class="t" style="left:1303.80px;top:354.54px;font-size:12px;color:#262626;font-weight:400;letter-spacing:0.020px;">Picture or texture fill</div>
<div style="position:absolute;left:1303.80px;top:366.30px;width:8.02px;height:1px;background:#262626;opacity:0.85"></div>
<div style="position:absolute;left:1285.5px;top:377.3px;width:12.5px;height:12.5px;box-sizing:border-box;border-radius:50%;border:1px solid #8f8f8f;background:#fff;"></div>
<div class="t" style="left:1303.80px;top:377.84px;font-size:12px;color:#262626;font-weight:400;letter-spacing:0.028px;">Pattern fill</div>
<div style="position:absolute;left:1311.83px;top:389.60px;width:6.69px;height:1px;background:#262626;opacity:0.85"></div>
<div style="position:absolute;left:1285.5px;top:400.5px;width:13px;height:13px;box-sizing:border-box;border:1px solid #8f8f8f;border-radius:2px;background:#fff;"></div>
<div class="t" style="left:1303.80px;top:401.14px;font-size:12px;color:#262626;font-weight:400;letter-spacing:-0.001px;">Hide background graphics</div>
<div style="position:absolute;left:1303.80px;top:412.90px;width:8.67px;height:1px;background:#262626;opacity:0.85"></div>
<div style="position:absolute;left:1286px;top:424.5px;width:219px;height:1px;background:#d9d9d9;"></div>
<div class="t" style="left:1295.80px;top:434.04px;font-size:12px;color:#262626;font-weight:400;letter-spacing:-0.236px;">Picture source</div>
<div style="position:absolute;left:1295.3px;top:452.5px;width:53.5px;height:24px;box-sizing:border-box;background:#fff;border:1px solid #c2c2c2;border-radius:4px;"></div>
<div class="t" style="left:1304.00px;top:458.64px;font-size:12px;color:#262626;font-weight:400;letter-spacing:-0.446px;">Insert...</div>
<div style="position:absolute;left:1324.89px;top:470.40px;width:4.02px;height:1px;background:#262626;opacity:0.85"></div>
<div style="position:absolute;left:1358px;top:452.5px;width:70.3px;height:24px;box-sizing:border-box;background:#fff;border:1px solid #c2c2c2;border-radius:4px;"></div>
<div class="t" style="left:1366.70px;top:458.64px;font-size:12px;color:#262626;font-weight:400;letter-spacing:0.125px;">Clipboard</div>
<div style="position:absolute;left:1366.70px;top:470.40px;width:8.67px;height:1px;background:#262626;opacity:0.85"></div>
<div class="t" style="left:1295.80px;top:491.34px;font-size:12px;color:#262626;font-weight:400;letter-spacing:-0.208px;">Texture</div>
<div style="position:absolute;left:1316.97px;top:503.10px;width:6.69px;height:1px;background:#262626;opacity:0.85"></div>
<div style="position:absolute;left:1459px;top:482.5px;width:45.5px;height:28px;box-sizing:border-box;background:#fff;border:1px solid #c8c8c8;border-radius:4px;"></div>
<svg style="position:absolute;left:1468px;top:487px;" width="18" height="18" viewBox="0 0 18 18"><rect x="1" y="1" width="14.6" height="15.6" fill="#fff" stroke="#454545" stroke-width="1.3"/><circle cx="3.6" cy="3.6" r="1.05" fill="#2f8ad8" opacity="1"/><circle cx="3.6" cy="6.7" r="1.05" fill="#2f8ad8" opacity="1"/><circle cx="3.6" cy="9.8" r="1.05" fill="#2f8ad8" opacity="0.55"/><circle cx="6.7" cy="3.6" r="1.05" fill="#2f8ad8" opacity="1"/><circle cx="6.7" cy="6.7" r="1.05" fill="#2f8ad8" opacity="0.55"/><circle cx="6.7" cy="12.9" r="1.05" fill="#2f8ad8" opacity="0.55"/><circle cx="9.8" cy="3.6" r="1.05" fill="#2f8ad8" opacity="0.55"/><circle cx="9.8" cy="9.8" r="1.05" fill="#2f8ad8" opacity="0.55"/><circle cx="9.8" cy="12.9" r="1.05" fill="#2f8ad8" opacity="1"/><circle cx="12.9" cy="6.7" r="1.05" fill="#2f8ad8" opacity="0.55"/><circle cx="12.9" cy="9.8" r="1.05" fill="#2f8ad8" opacity="1"/><circle cx="12.9" cy="12.9" r="1.05" fill="#2f8ad8" opacity="1"/></svg>
<svg style="position:absolute;left:1491px;top:494px;" width="8" height="6" viewBox="0 0 8 6"><path d="M1 1.5l3 3 3-3" fill="none" stroke="#333" stroke-width="1.1"/></svg>
<div class="t" style="left:1295.80px;top:520.64px;font-size:12px;color:#262626;font-weight:400;letter-spacing:-0.310px;">Transparency</div>
<div style="position:absolute;left:1295.80px;top:532.40px;width:6.89px;height:1px;background:#262626;opacity:0.85"></div>
<div style="position:absolute;left:1376px;top:521px;width:1.2px;height:9.5px;background:#6a6a6a;"></div>
<div style="position:absolute;left:1376px;top:525px;width:46px;height:1px;background:#9a9a9a;"></div>
<div style="position:absolute;left:1430.5px;top:516.3px;width:74px;height:19.7px;box-sizing:border-box;background:#fff;border:1px solid #c8c8c8;border-radius:4px;"></div>
<div class="t" style="left:1436.70px;top:520.84px;font-size:11px;color:#4a4a4a;font-weight:400;letter-spacing:-0.703px;">0%</div>
<svg style="position:absolute;left:1493px;top:519.5999999999999px;" width="6" height="4" viewBox="0 0 6 4"><path d="M0.5 3L2.8 0.8L5 3" fill="none" stroke="#3a3a3a" stroke-width="1"/></svg>
<svg style="position:absolute;left:1493px;top:529.2px;" width="6" height="4" viewBox="0 0 6 4"><path d="M0.5 0.8L2.8 3L5 0.8" fill="none" stroke="#3a3a3a" stroke-width="1"/></svg>
<div style="position:absolute;left:1295.5px;top:544px;width:13px;height:13px;background:#c43e1c;border-radius:2px;"></div>
<svg style="position:absolute;left:1295.5px;top:544px;" width="13" height="13" viewBox="0 0 13 13"><path d="M3 6.8l2.4 2.4 4.8-5" fill="none" stroke="#fff" stroke-width="1.4"/></svg>
<div class="t" style="left:1313.30px;top:545.34px;font-size:12px;color:#262626;font-weight:400;letter-spacing:-0.038px;">Tile picture as texture</div>
<div style="position:absolute;left:1320.14px;top:557.10px;width:2.69px;height:1px;background:#262626;opacity:0.85"></div>
<div class="t" style="left:1305.00px;top:573.14px;font-size:12px;color:#262626;font-weight:400;letter-spacing:-0.080px;">Offset X</div>
<div style="position:absolute;left:1305.00px;top:584.90px;width:9.34px;height:1px;background:#262626;opacity:0.85"></div>
<div class="t" style="left:1305.00px;top:599.34px;font-size:12px;color:#262626;font-weight:400;letter-spacing:-0.153px;">Offset Y</div>
<div style="position:absolute;left:1326.17px;top:611.10px;width:6.69px;height:1px;background:#262626;opacity:0.85"></div>
<div class="t" style="left:1305.00px;top:626.14px;font-size:12px;color:#262626;font-weight:400;letter-spacing:-0.437px;">Scale X</div>
<div style="position:absolute;left:1335.72px;top:637.90px;width:8.02px;height:1px;background:#262626;opacity:0.85"></div>
<div class="t" style="left:1305.00px;top:652.34px;font-size:12px;color:#262626;font-weight:400;letter-spacing:-0.520px;">Scale Y</div>
<div style="position:absolute;left:1335.00px;top:664.10px;width:8.02px;height:1px;background:#262626;opacity:0.85"></div>
<div style="position:absolute;left:1430.5px;top:568.3px;width:74px;height:20.5px;box-sizing:border-box;background:#fff;border:1px solid #c8c8c8;border-radius:4px;"></div>
<div class="t" style="left:1436.70px;top:573.24px;font-size:11px;color:#4a4a4a;font-weight:400;letter-spacing:-0.015px;">0 pt</div>
<svg style="position:absolute;left:1493px;top:571.5999999999999px;" width="6" height="4" viewBox="0 0 6 4"><path d="M0.5 3L2.8 0.8L5 3" fill="none" stroke="#3a3a3a" stroke-width="1"/></svg>
<svg style="position:absolute;left:1493px;top:582.0px;" width="6" height="4" viewBox="0 0 6 4"><path d="M0.5 0.8L2.8 3L5 0.8" fill="none" stroke="#3a3a3a" stroke-width="1"/></svg>
<div style="position:absolute;left:1430.5px;top:594.5px;width:74px;height:20.5px;box-sizing:border-box;background:#fff;border:1px solid #c8c8c8;border-radius:4px;"></div>
<div class="t" style="left:1436.70px;top:599.44px;font-size:11px;color:#4a4a4a;font-weight:400;letter-spacing:-0.015px;">0 pt</div>
<svg style="position:absolute;left:1493px;top:597.8px;" width="6" height="4" viewBox="0 0 6 4"><path d="M0.5 3L2.8 0.8L5 3" fill="none" stroke="#3a3a3a" stroke-width="1"/></svg>
<svg style="position:absolute;left:1493px;top:608.2px;" width="6" height="4" viewBox="0 0 6 4"><path d="M0.5 0.8L2.8 3L5 0.8" fill="none" stroke="#3a3a3a" stroke-width="1"/></svg>
<div style="position:absolute;left:1430.5px;top:621.3px;width:74px;height:20.5px;box-sizing:border-box;background:#fff;border:1px solid #c8c8c8;border-radius:4px;"></div>
<div class="t" style="left:1436.70px;top:626.24px;font-size:11px;color:#4a4a4a;font-weight:400;letter-spacing:-1.085px;">100%</div>
<svg style="position:absolute;left:1493px;top:624.5999999999999px;" width="6" height="4" viewBox="0 0 6 4"><path d="M0.5 3L2.8 0.8L5 3" fill="none" stroke="#3a3a3a" stroke-width="1"/></svg>
<svg style="position:absolute;left:1493px;top:635.0px;" width="6" height="4" viewBox="0 0 6 4"><path d="M0.5 0.8L2.8 3L5 0.8" fill="none" stroke="#3a3a3a" stroke-width="1"/></svg>
<div style="position:absolute;left:1430.5px;top:647.5px;width:74px;height:20.5px;box-sizing:border-box;background:#fff;border:1px solid #c8c8c8;border-radius:4px;"></div>
<div class="t" style="left:1436.70px;top:652.44px;font-size:11px;color:#4a4a4a;font-weight:400;letter-spacing:-1.085px;">100%</div>
<svg style="position:absolute;left:1493px;top:650.8px;" width="6" height="4" viewBox="0 0 6 4"><path d="M0.5 3L2.8 0.8L5 3" fill="none" stroke="#3a3a3a" stroke-width="1"/></svg>
<svg style="position:absolute;left:1493px;top:661.2px;" width="6" height="4" viewBox="0 0 6 4"><path d="M0.5 0.8L2.8 3L5 0.8" fill="none" stroke="#3a3a3a" stroke-width="1"/></svg>
<div class="t" style="left:1304.80px;top:679.34px;font-size:12px;color:#262626;font-weight:400;letter-spacing:0.225px;">Alignment</div>
<div style="position:absolute;left:1313.02px;top:691.10px;width:2.67px;height:1px;background:#262626;opacity:0.85"></div>
<div style="position:absolute;left:1408.7px;top:674.5px;width:95.5px;height:20px;box-sizing:border-box;background:#fff;border:1px solid #8f8f8f;border-radius:4px;"></div>
<div class="t" style="left:1414.20px;top:678.84px;font-size:12px;color:#262626;font-weight:400;letter-spacing:0.187px;">Top left</div>
<svg style="position:absolute;left:1492px;top:682px;" width="8" height="6" viewBox="0 0 8 6"><path d="M1 1.5l3 3 3-3" fill="none" stroke="#333" stroke-width="1.1"/></svg>
<div class="t" style="left:1304.80px;top:705.34px;font-size:12px;color:#262626;font-weight:400;letter-spacing:0.205px;">Mirror type</div>
<div style="position:absolute;left:1304.80px;top:717.10px;width:10.00px;height:1px;background:#262626;opacity:0.85"></div>
<div style="position:absolute;left:1421px;top:701px;width:83.2px;height:20px;box-sizing:border-box;background:#fff;border:1px solid #c8c8c8;border-radius:4px;"></div>
<div class="t" style="left:1426.00px;top:705.34px;font-size:12px;color:#262626;font-weight:400;letter-spacing:0.028px;">None</div>
<svg style="position:absolute;left:1492px;top:708px;" width="8" height="6" viewBox="0 0 8 6"><path d="M1 1.5l3 3 3-3" fill="none" stroke="#333" stroke-width="1.1"/></svg>
<div style="position:absolute;left:1295.6px;top:729px;width:13px;height:12.5px;box-sizing:border-box;border:1px solid #d6d6d6;border-radius:2px;"></div>
<div class="t" style="left:1313.20px;top:729.34px;font-size:12px;color:#bdbdbd;font-weight:400;letter-spacing:-0.062px;">Rotate with shape</div>
<div style="position:absolute;left:1351.45px;top:741.10px;width:8.67px;height:1px;background:#bdbdbd;opacity:0.85"></div>
<div style="position:absolute;left:1263.2px;top:755.6px;width:80.5px;height:24.4px;box-sizing:border-box;background:#fff;border:1px solid #c2c2c2;border-radius:4px;"></div>
<div class="t" style="left:1272.40px;top:762.14px;font-size:12px;color:#262626;font-weight:400;letter-spacing:0.302px;">Apply to All</div>
<div style="position:absolute;left:1294.65px;top:773.90px;width:2.69px;height:1px;background:#262626;opacity:0.85"></div>
<div style="position:absolute;left:1353.2px;top:755.6px;width:112.6px;height:24.4px;box-sizing:border-box;background:#fff;border:1px solid #c2c2c2;border-radius:4px;"></div>
<div class="t" style="left:1362.00px;top:762.14px;font-size:12px;color:#262626;font-weight:400;letter-spacing:-0.233px;">Reset Background</div>
<div style="position:absolute;left:1395.27px;top:773.90px;width:8.02px;height:1px;background:#262626;opacity:0.85"></div>
<div style="position:absolute;left:0px;top:797px;width:1536px;height:19px;background:#f3f3f3;border-top:1px solid #fafafa;box-sizing:border-box;"></div>
<div class="t" style="left:8.90px;top:802.69px;font-size:11px;color:#4a4a4a;font-weight:400;letter-spacing:-0.254px;">Slide 1 of 1</div>
<svg style="position:absolute;left:76px;top:797px;" width="24" height="19" viewBox="0 0 24 19"><path d="M9.5 16.3H5.6V5.3H9.2Q11.4 5.3 11.4 7.5Q11.4 5.3 13.6 5.3H17.7V10.3M11.4 7.5V12.4" fill="none" stroke="#454545" stroke-width="1.2"/><path d="M10.5 14.3L13.5 17.3L18.8 12.2" fill="none" stroke="#454545" stroke-width="1.2"/></svg>
<div class="t" style="left:112.50px;top:802.69px;font-size:11px;color:#4a4a4a;font-weight:400;letter-spacing:-0.389px;">English (India)</div>
<svg style="position:absolute;left:190px;top:797px;" width="24" height="19" viewBox="0 0 24 19"><circle cx="10.3" cy="6.3" r="1.9" fill="none" stroke="#454545" stroke-width="1.2"/><path d="M4.6 7.1C5.3 9.2 7.6 9.4 8.2 10.6C8.5 12.2 7.6 14.6 6.9 16.6L8.4 17.2M16.1 7.1C15.8 9 13 9.3 12.8 11.8" fill="none" stroke="#454545" stroke-width="1.2"/><path d="M10.6 14.3L13.8 17.2L18.8 12.2" fill="none" stroke="#454545" stroke-width="1.2"/></svg>
<div class="t" style="left:212.00px;top:802.69px;font-size:11px;color:#4a4a4a;font-weight:400;letter-spacing:-0.194px;">Accessibility: Good to go</div>
<svg style="position:absolute;left:1114px;top:799px;" width="18" height="17" viewBox="0 0 18 17"><path d="M6.5 3.5l2.5-2.5 2.5 2.5" fill="none" stroke="#444" stroke-width="1.1"/><path d="M1 7h16M1 10.5h16M1 14.5h16" stroke="#444" stroke-width="1.1"/></svg>
<div class="t" style="left:1132.60px;top:802.69px;font-size:11px;color:#4a4a4a;font-weight:400;letter-spacing:-0.150px;">Notes</div>
<div style="position:absolute;left:1180px;top:797px;width:40px;height:19px;background:#dcdcdc;"></div>
<svg style="position:absolute;left:1192px;top:801px;" width="17" height="13" viewBox="0 0 17 13"><rect x="1" y="1" width="14.5" height="11" fill="none" stroke="#444" stroke-width="1.1"/><path d="M3.5 1v11" stroke="#444" stroke-width="1"/><rect x="6" y="3.5" width="7" height="5" fill="none" stroke="#444" stroke-width="1"/></svg>
<svg style="position:absolute;left:1232px;top:800px;" width="16" height="15" viewBox="0 0 16 15"><rect x="1" y="1" width="5.5" height="5.5" fill="none" stroke="#444" stroke-width="1.1"/><rect x="9" y="1" width="5.5" height="5.5" fill="none" stroke="#444" stroke-width="1.1"/><rect x="1" y="8.5" width="5.5" height="5.5" fill="none" stroke="#444" stroke-width="1.1"/><rect x="9" y="8.5" width="5.5" height="5.5" fill="none" stroke="#444" stroke-width="1.1"/></svg>
<svg style="position:absolute;left:1272px;top:800px;" width="16" height="15" viewBox="0 0 16 15"><path d="M1 1.5h6l1 1 1-1h6v11.5H9l-1 1-1-1H1z" fill="none" stroke="#444" stroke-width="1.1"/><path d="M8 2.5v10.5M2.5 4.5h3M2.5 7h3M10.5 4.5h3M10.5 7h3" stroke="#444" stroke-width="0.9"/></svg>
<svg style="position:absolute;left:1313px;top:800px;" width="14" height="16" viewBox="0 0 14 16"><rect x="1" y="1" width="12" height="7.5" fill="none" stroke="#444" stroke-width="1.1"/><path d="M7 8.5v6M3.5 14.5h7M5.5 3l3 1.8-3 1.8z" fill="none" stroke="#444" stroke-width="1"/></svg>
<div style="position:absolute;left:1345.5px;top:807px;width:8px;height:1px;background:#555;"></div>
<div style="position:absolute;left:1359px;top:807px;width:99px;height:1px;background:#8a8a8a;"></div>
<div style="position:absolute;left:1395px;top:802px;width:4.5px;height:11.5px;background:#555;"></div>
<div style="position:absolute;left:1408px;top:804px;width:1px;height:7px;background:#8a8a8a;"></div>
<svg style="position:absolute;left:1463px;top:802px;" width="10" height="10" viewBox="0 0 10 10"><path d="M5 1v8M1 5h8" stroke="#555" stroke-width="1"/></svg>
<div class="t" style="left:1483.80px;top:802.69px;font-size:11px;color:#4a4a4a;font-weight:400;letter-spacing:-0.744px;">78%</div>
<svg style="position:absolute;left:1516px;top:799px;" width="19" height="17" viewBox="0 0 19 17"><rect x="5.5" y="4.5" width="7" height="7" fill="none" stroke="#444" stroke-width="1.1"/><path d="M9 0.5l-2 2h4zM9 15.5l-2-2h4zM0.5 8l2-2v4zM17.5 8l-2-2v4z" fill="none" stroke="#444" stroke-width="1"/></svg>
</body></html>
